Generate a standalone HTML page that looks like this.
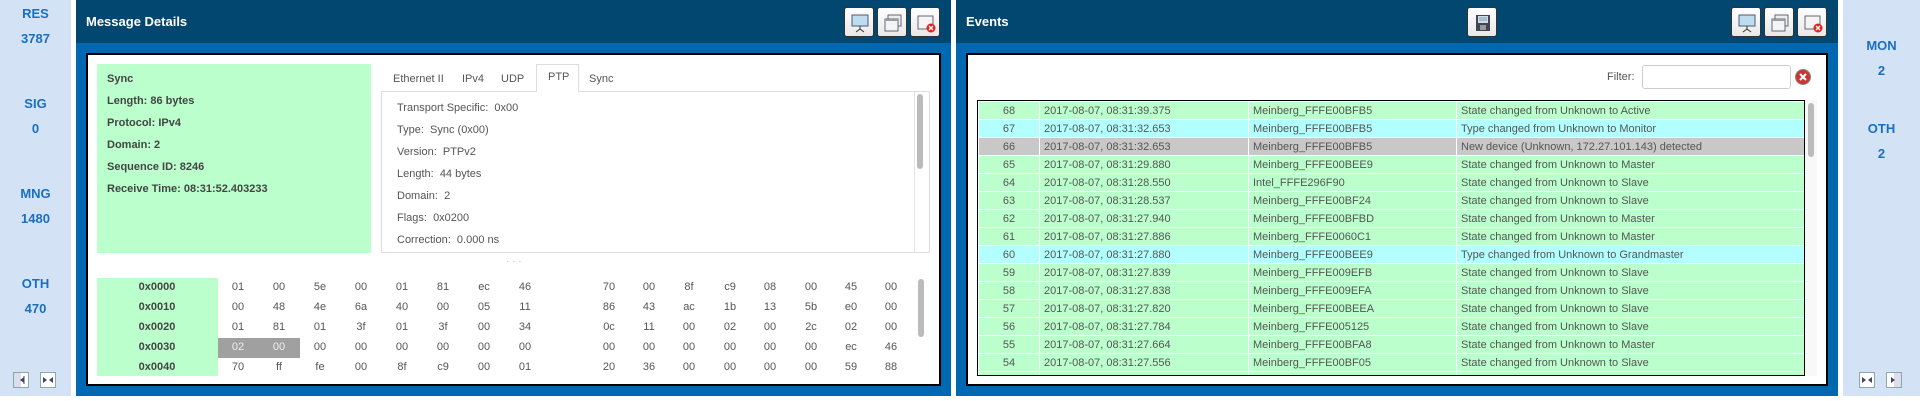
<!DOCTYPE html>
<html><head><meta charset="utf-8"><style>
*{margin:0;padding:0;box-sizing:border-box}
body{width:1920px;height:401px;background:#fff;position:relative;overflow:hidden;font-family:"Liberation Sans",sans-serif;font-size:11px;color:#555}
.a{position:absolute}
.side{background:#d3e3f5;top:0;height:396px}
.st{position:absolute;width:100%;text-align:center;font-weight:bold;font-size:13px;color:#1a6fc0}
.hdr{background:#01476f;height:43px;top:0}
.blue{background:#0068b0;top:43px;height:353px}
.inner{background:#fff;border:2px solid #000}
.ttl{color:#fff;font-weight:bold;font-size:13px;top:14px}
.btn{width:30px;height:30px;top:7px;background:linear-gradient(#fff,#e8e8e8);border:1px solid #333;border-radius:3px}
.btn svg{position:absolute;left:5px;top:5px}
.gl{position:absolute;left:10px;font-weight:bold;color:#444}
.pl{position:absolute;left:15px;color:#555}
.hx{position:absolute;width:30px;text-align:center;margin-left:-15px}
table{border-collapse:collapse}
td{height:18px;border:1px solid #fff;padding:0 4px;white-space:nowrap;color:#555;font-size:11px}
.g td{background:#bbffcc}.c td{background:#b3ffff}.y td{background:#c8c8c8}
td.n{text-align:center;width:61px}
</style></head><body>
<div class="a side" style="left:0;width:71px">
<div class="st" style="top:6px">RES</div><div class="st" style="top:31px">3787</div>
<div class="st" style="top:96px">SIG</div><div class="st" style="top:121px">0</div>
<div class="st" style="top:186px">MNG</div><div class="st" style="top:211px">1480</div>
<div class="st" style="top:276px">OTH</div><div class="st" style="top:301px">470</div>
<svg class="a" style="left:13px;top:372px" width="16" height="16"><rect x="0.5" y="0.5" width="15" height="15" fill="#fff" stroke="#8aa"/><rect x="1" y="1" width="7" height="14" fill="#dde"/><path d="M11 5v6l-4-3z" fill="#446"/><line x1="11" y1="4" x2="11" y2="12" stroke="#446"/></svg>
<svg class="a" style="left:40px;top:372px" width="16" height="16"><rect x="0.5" y="0.5" width="15" height="15" fill="#fff" stroke="#8aa"/><path d="M3 5v6l4-3zM13 5v6l-4-3z" fill="#446"/></svg>
</div>
<div class="a side" style="left:1843px;width:77px">
<div class="st" style="top:38px">MON</div><div class="st" style="top:63px">2</div>
<div class="st" style="top:121px">OTH</div><div class="st" style="top:146px">2</div>
<svg class="a" style="left:16px;top:372px" width="16" height="16"><rect x="0.5" y="0.5" width="15" height="15" fill="#fff" stroke="#8aa"/><path d="M3 5v6l4-3zM13 5v6l-4-3z" fill="#446"/></svg>
<svg class="a" style="left:43px;top:372px" width="16" height="16"><rect x="0.5" y="0.5" width="15" height="15" fill="#fff" stroke="#8aa"/><rect x="8" y="1" width="7" height="14" fill="#dde"/><path d="M5 5v6l4-3z" fill="#446"/></svg>
</div>

<div class="a hdr" style="left:76px;width:875px"></div>
<div class="a blue" style="left:76px;width:875px"></div>
<div class="a ttl" style="left:86px">Message Details</div>
<div class="a btn" style="left:844px"><svg width="20" height="20"><rect x="2" y="2" width="16" height="11" fill="#bde" stroke="#557"/><path d="M10 13v3M6 19l4-3 4 3" stroke="#333" fill="none"/></svg></div>
<div class="a btn" style="left:877px"><svg width="20" height="20"><rect x="5" y="2" width="13" height="11" fill="#eee" stroke="#667"/><rect x="2" y="6" width="13" height="12" fill="#f4f4f4" stroke="#667"/><rect x="2" y="6" width="13" height="2" fill="#99a"/></svg></div>
<div class="a btn" style="left:910px"><svg width="20" height="20"><rect x="2" y="3" width="15" height="13" fill="#f4f4f4" stroke="#667"/><circle cx="15" cy="15" r="4.5" fill="#d22"/><path d="M13 13l4 4M17 13l-4 4" stroke="#fff" stroke-width="1.3"/></svg></div>
<div class="a inner" style="left:86px;top:53px;width:855px;height:333px"></div>

<div class="a" style="left:97px;top:64px;width:274px;height:189px;background:#bbffcc">
<div class="gl" style="top:9px">Sync</div>
<div class="gl" style="top:31px">Length: 86 bytes</div>
<div class="gl" style="top:53px">Protocol: IPv4</div>
<div class="gl" style="top:75px">Domain: 2</div>
<div class="gl" style="top:97px">Sequence ID: 8246</div>
<div class="gl" style="top:119px">Receive Time: 08:31:52.403233</div>
</div>
<div class="a" style="left:536px;top:64px;width:43px;height:28px;background:#fff;border:1px solid #ddd;border-bottom:none;z-index:2"></div>
<div class="a" style="left:393px;top:73px">Ethernet II</div>
<div class="a" style="left:462px;top:73px">IPv4</div>
<div class="a" style="left:501px;top:73px">UDP</div>
<div class="a" style="left:548px;top:71px;z-index:3">PTP</div>
<div class="a" style="left:589px;top:73px">Sync</div>
<div class="a" style="left:381px;top:91px;width:549px;height:162px;border:1px solid #ddd">
<div class="pl" style="top:10px">Transport Specific:&nbsp; 0x00</div>
<div class="pl" style="top:32px">Type:&nbsp; Sync (0x00)</div>
<div class="pl" style="top:54px">Version:&nbsp; PTPv2</div>
<div class="pl" style="top:76px">Length:&nbsp; 44 bytes</div>
<div class="pl" style="top:98px">Domain:&nbsp; 2</div>
<div class="pl" style="top:120px">Flags:&nbsp; 0x0200</div>
<div class="pl" style="top:142px">Correction:&nbsp; 0.000 ns</div>
<div class="a" style="left:532px;top:0;width:1px;height:160px;background:#e4e4e4"></div>
<div class="a" style="left:535px;top:2px;width:6px;height:75px;background:#bbb;border-radius:3px"></div>
</div>
<div class="a" style="left:506px;top:256px;color:#bbb;font-size:10px">· · ·</div>
<div class="a" style="left:97px;top:278px;width:121px;height:98px;background:#bbffcc"></div>
<div class="a" style="left:218px;top:338px;width:82px;height:20px;background:#a0a0a0"></div>
<div class="a" style="left:918px;top:279px;width:6px;height:58px;background:#bbb;border-radius:3px"></div>

<div class="a hdr" style="left:956px;width:882px"></div>
<div class="a blue" style="left:956px;width:882px"></div>
<div class="a ttl" style="left:966px">Events</div>
<div class="a btn" style="left:1467px"><svg width="20" height="20"><rect x="3" y="2" width="14" height="16" fill="#445" /><rect x="5" y="3" width="10" height="7" fill="#cde"/><path d="M6 5h8M6 7h8" stroke="#89a"/><rect x="7" y="12" width="6" height="5" fill="#999"/></svg></div>
<div class="a btn" style="left:1731px"><svg width="20" height="20"><rect x="2" y="2" width="16" height="11" fill="#bde" stroke="#557"/><path d="M10 13v3M6 19l4-3 4 3" stroke="#333" fill="none"/></svg></div>
<div class="a btn" style="left:1764px"><svg width="20" height="20"><rect x="5" y="2" width="13" height="11" fill="#eee" stroke="#667"/><rect x="2" y="6" width="13" height="12" fill="#f4f4f4" stroke="#667"/><rect x="2" y="6" width="13" height="2" fill="#99a"/></svg></div>
<div class="a btn" style="left:1797px"><svg width="20" height="20"><rect x="2" y="3" width="15" height="13" fill="#f4f4f4" stroke="#667"/><circle cx="15" cy="15" r="4.5" fill="#d22"/><path d="M13 13l4 4M17 13l-4 4" stroke="#fff" stroke-width="1.3"/></svg></div>
<div class="a inner" style="left:966px;top:53px;width:862px;height:333px"></div>
<div class="a" style="left:1607px;top:71px;color:#555">Filter:</div>
<div class="a" style="left:1642px;top:65px;width:149px;height:24px;border:1px solid #ccc;border-radius:3px;background:#fff"></div>
<svg class="a" style="left:1795px;top:69px" width="16" height="16"><circle cx="8" cy="8" r="7.5" fill="#c33" stroke="#888"/><path d="M5 5l6 6M11 5l-6 6" stroke="#fff" stroke-width="2"/></svg>
<div class="a" style="left:1805px;top:100px;width:12px;height:276px;background:#f8f8f8"></div>
<div class="a" style="left:1808px;top:103px;width:6px;height:54px;background:#bbb;border-radius:3px"></div>
<div class="a" style="left:977px;top:100px;width:828px;height:276px;border:1px solid #000;overflow:hidden;background:#bbffcc">
<table style="width:828px;table-layout:fixed">
<colgroup><col style="width:61px"><col style="width:209px"><col style="width:208px"><col></colgroup>
<tr class="g"><td class="n">68</td><td>2017-08-07, 08:31:39.375</td><td>Meinberg_FFFE00BFB5</td><td>State changed from Unknown to Active</td></tr>
<tr class="c"><td class="n">67</td><td>2017-08-07, 08:31:32.653</td><td>Meinberg_FFFE00BFB5</td><td>Type changed from Unknown to Monitor</td></tr>
<tr class="y"><td class="n">66</td><td>2017-08-07, 08:31:32.653</td><td>Meinberg_FFFE00BFB5</td><td>New device (Unknown, 172.27.101.143) detected</td></tr>
<tr class="g"><td class="n">65</td><td>2017-08-07, 08:31:29.880</td><td>Meinberg_FFFE00BEE9</td><td>State changed from Unknown to Master</td></tr>
<tr class="g"><td class="n">64</td><td>2017-08-07, 08:31:28.550</td><td>Intel_FFFE296F90</td><td>State changed from Unknown to Slave</td></tr>
<tr class="g"><td class="n">63</td><td>2017-08-07, 08:31:28.537</td><td>Meinberg_FFFE00BF24</td><td>State changed from Unknown to Slave</td></tr>
<tr class="g"><td class="n">62</td><td>2017-08-07, 08:31:27.940</td><td>Meinberg_FFFE00BFBD</td><td>State changed from Unknown to Master</td></tr>
<tr class="g"><td class="n">61</td><td>2017-08-07, 08:31:27.886</td><td>Meinberg_FFFE0060C1</td><td>State changed from Unknown to Master</td></tr>
<tr class="c"><td class="n">60</td><td>2017-08-07, 08:31:27.880</td><td>Meinberg_FFFE00BEE9</td><td>Type changed from Unknown to Grandmaster</td></tr>
<tr class="g"><td class="n">59</td><td>2017-08-07, 08:31:27.839</td><td>Meinberg_FFFE009EFB</td><td>State changed from Unknown to Slave</td></tr>
<tr class="g"><td class="n">58</td><td>2017-08-07, 08:31:27.838</td><td>Meinberg_FFFE009EFA</td><td>State changed from Unknown to Slave</td></tr>
<tr class="g"><td class="n">57</td><td>2017-08-07, 08:31:27.820</td><td>Meinberg_FFFE00BEEA</td><td>State changed from Unknown to Slave</td></tr>
<tr class="g"><td class="n">56</td><td>2017-08-07, 08:31:27.784</td><td>Meinberg_FFFE005125</td><td>State changed from Unknown to Slave</td></tr>
<tr class="g"><td class="n">55</td><td>2017-08-07, 08:31:27.664</td><td>Meinberg_FFFE00BFA8</td><td>State changed from Unknown to Master</td></tr>
<tr class="g"><td class="n">54</td><td>2017-08-07, 08:31:27.556</td><td>Meinberg_FFFE00BF05</td><td>State changed from Unknown to Slave</td></tr>
<tr class="g"><td class="n">53</td><td></td><td></td><td></td></tr>
</table></div>

<div class="a" style="left:0;top:281px;width:1px">
<div class="hx" style="left:157px;width:80px;margin-left:-40px;font-weight:bold;color:#444;top:0">0x0000</div>
<div class="hx" style="left:157px;width:80px;margin-left:-40px;font-weight:bold;color:#444;top:20px">0x0010</div>
<div class="hx" style="left:157px;width:80px;margin-left:-40px;font-weight:bold;color:#444;top:40px">0x0020</div>
<div class="hx" style="left:157px;width:80px;margin-left:-40px;font-weight:bold;color:#444;top:60px">0x0030</div>
<div class="hx" style="left:157px;width:80px;margin-left:-40px;font-weight:bold;color:#444;top:80px">0x0040</div>
<div class="hx" style="top:0;left:238px">01</div><div class="hx" style="top:0;left:279px">00</div><div class="hx" style="top:0;left:320px">5e</div><div class="hx" style="top:0;left:361px">00</div><div class="hx" style="top:0;left:402px">01</div><div class="hx" style="top:0;left:443px">81</div><div class="hx" style="top:0;left:484px">ec</div><div class="hx" style="top:0;left:525px">46</div>
<div class="hx" style="top:0;left:609px">70</div><div class="hx" style="top:0;left:649px">00</div><div class="hx" style="top:0;left:689px">8f</div><div class="hx" style="top:0;left:730px">c9</div><div class="hx" style="top:0;left:770px">08</div><div class="hx" style="top:0;left:811px">00</div><div class="hx" style="top:0;left:851px">45</div><div class="hx" style="top:0;left:891px">00</div>
<div class="hx" style="top:20px;left:238px">00</div><div class="hx" style="top:20px;left:279px">48</div><div class="hx" style="top:20px;left:320px">4e</div><div class="hx" style="top:20px;left:361px">6a</div><div class="hx" style="top:20px;left:402px">40</div><div class="hx" style="top:20px;left:443px">00</div><div class="hx" style="top:20px;left:484px">05</div><div class="hx" style="top:20px;left:525px">11</div>
<div class="hx" style="top:20px;left:609px">86</div><div class="hx" style="top:20px;left:649px">43</div><div class="hx" style="top:20px;left:689px">ac</div><div class="hx" style="top:20px;left:730px">1b</div><div class="hx" style="top:20px;left:770px">13</div><div class="hx" style="top:20px;left:811px">5b</div><div class="hx" style="top:20px;left:851px">e0</div><div class="hx" style="top:20px;left:891px">00</div>
<div class="hx" style="top:40px;left:238px">01</div><div class="hx" style="top:40px;left:279px">81</div><div class="hx" style="top:40px;left:320px">01</div><div class="hx" style="top:40px;left:361px">3f</div><div class="hx" style="top:40px;left:402px">01</div><div class="hx" style="top:40px;left:443px">3f</div><div class="hx" style="top:40px;left:484px">00</div><div class="hx" style="top:40px;left:525px">34</div>
<div class="hx" style="top:40px;left:609px">0c</div><div class="hx" style="top:40px;left:649px">11</div><div class="hx" style="top:40px;left:689px">00</div><div class="hx" style="top:40px;left:730px">02</div><div class="hx" style="top:40px;left:770px">00</div><div class="hx" style="top:40px;left:811px">2c</div><div class="hx" style="top:40px;left:851px">02</div><div class="hx" style="top:40px;left:891px">00</div>
<div class="hx" style="top:60px;left:238px;color:#eee">02</div><div class="hx" style="top:60px;left:279px;color:#eee">00</div><div class="hx" style="top:60px;left:320px">00</div><div class="hx" style="top:60px;left:361px">00</div><div class="hx" style="top:60px;left:402px">00</div><div class="hx" style="top:60px;left:443px">00</div><div class="hx" style="top:60px;left:484px">00</div><div class="hx" style="top:60px;left:525px">00</div>
<div class="hx" style="top:60px;left:609px">00</div><div class="hx" style="top:60px;left:649px">00</div><div class="hx" style="top:60px;left:689px">00</div><div class="hx" style="top:60px;left:730px">00</div><div class="hx" style="top:60px;left:770px">00</div><div class="hx" style="top:60px;left:811px">00</div><div class="hx" style="top:60px;left:851px">ec</div><div class="hx" style="top:60px;left:891px">46</div>
<div class="hx" style="top:80px;left:238px">70</div><div class="hx" style="top:80px;left:279px">ff</div><div class="hx" style="top:80px;left:320px">fe</div><div class="hx" style="top:80px;left:361px">00</div><div class="hx" style="top:80px;left:402px">8f</div><div class="hx" style="top:80px;left:443px">c9</div><div class="hx" style="top:80px;left:484px">00</div><div class="hx" style="top:80px;left:525px">01</div>
<div class="hx" style="top:80px;left:609px">20</div><div class="hx" style="top:80px;left:649px">36</div><div class="hx" style="top:80px;left:689px">00</div><div class="hx" style="top:80px;left:730px">00</div><div class="hx" style="top:80px;left:770px">00</div><div class="hx" style="top:80px;left:811px">00</div><div class="hx" style="top:80px;left:851px">59</div><div class="hx" style="top:80px;left:891px">88</div>
</div>
</body></html>
